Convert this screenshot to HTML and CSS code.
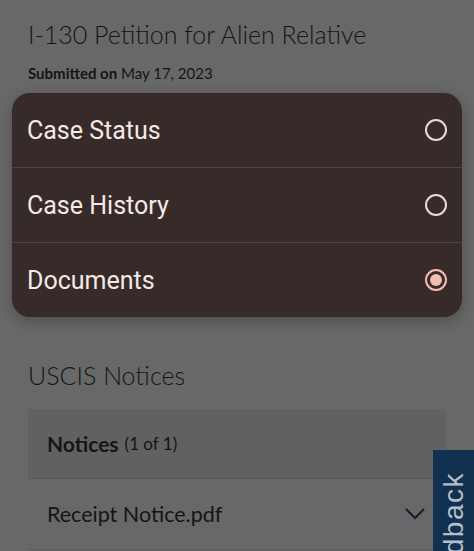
FILE: index.html
```html
<!DOCTYPE html>
<html lang="en">
<head>
    <meta charset="UTF-8">
    <meta name="viewport" content="width=device-width, initial-scale=1.0">
    <title>Case Details</title>
    <link rel="stylesheet" href="styles.css">
</head>
<body>
    <div class="page">
        <h1 class="case-title">I-130 Petition for Alien Relative</h1>
        <p class="submitted"><b>Submitted on</b> May 17, 2023</p>

        <div class="menu">
            <div class="menu-item">
                <span>Case Status</span>
                <span class="radio"></span>
            </div>
            <div class="menu-item">
                <span>Case History</span>
                <span class="radio"></span>
            </div>
            <div class="menu-item">
                <span>Documents</span>
                <span class="radio checked"></span>
            </div>
        </div>

        <h2 class="section-title">USCIS Notices</h2>
        <div class="notices-head">
            <b>Notices</b> <span class="count">(1 of 1)</span>
        </div>
        <div class="notice-row">
            <span>Receipt Notice.pdf</span>
            <svg class="chevron" width="22" height="14" viewBox="0 0 22 14">
                <path d="M2 2 L11 11 L20 2" fill="none" stroke="#0f2236" stroke-width="2.2"/>
            </svg>
        </div>
    </div>

    <div class="feedback"><span>Feedback</span></div>
</body>
</html>
```

FILE: styles.css
```css
body {
    margin: 0;
    background: #686868;
    font-family: 'Lato', sans-serif;
    color: #151515;
    overflow: hidden;
}
.page { padding: 17px 28px 0; }
.case-title {
    font-weight: 300;
    font-size: 25px;
    margin: 0;
    line-height: 34px;
}
.submitted {
    font-size: 15px;
    margin: 12px 0 0;
    line-height: 20px;
}
.menu {
    margin: 10px -16px 0;
    background: #372b29;
    border-radius: 18px;
    box-shadow: 0 4px 14px rgba(0, 0, 0, 0.25);
    font-family: 'Roboto', sans-serif;
    color: #f3e9e6;
    font-size: 25px;
}
.menu-item {
    display: flex;
    align-items: center;
    justify-content: space-between;
    height: 74px;
    padding: 0 15px;
    border-top: 1px solid #51443f;
}
.menu-item:first-child { border-top: none; }
.radio {
    width: 18px;
    height: 18px;
    border: 2px solid #e8dad6;
    border-radius: 50%;
    display: flex;
    align-items: center;
    justify-content: center;
}
.radio.checked { border-color: #f5bcb3; }
.radio.checked::after {
    content: '';
    width: 12px;
    height: 12px;
    border-radius: 50%;
    background: #f5bcb3;
}
.section-title {
    font-weight: 300;
    font-size: 25px;
    margin: 41px 0 0;
    line-height: 34px;
}
.notices-head {
    margin-top: 17px;
    background: #616161;
    height: 69px;
    display: flex;
    align-items: center;
    padding: 0 19px;
    font-size: 21px;
    border-bottom: 1px solid #5a5a5a;
}
.notices-head .count { font-size: 17px; margin-left: 6px; }
.notice-row {
    display: flex;
    align-items: center;
    justify-content: space-between;
    height: 70px;
    padding: 0 20px 0 19px;
    font-size: 21.5px;
    border-bottom: 1px solid #5c5c5c;
}
.feedback {
    position: absolute;
    left: 433px;
    top: 450px;
    width: 41px;
    height: 101px;
    background: #12304f;
    overflow: hidden;
}
.feedback span {
    position: absolute;
    left: 5px;
    top: 157px;
    transform: rotate(-90deg);
    transform-origin: left top;
    font-family: 'Liberation Sans', sans-serif;
    font-size: 28px;
    letter-spacing: 1.5px;
    color: #b3bfcb;
    white-space: nowrap;
}
```
